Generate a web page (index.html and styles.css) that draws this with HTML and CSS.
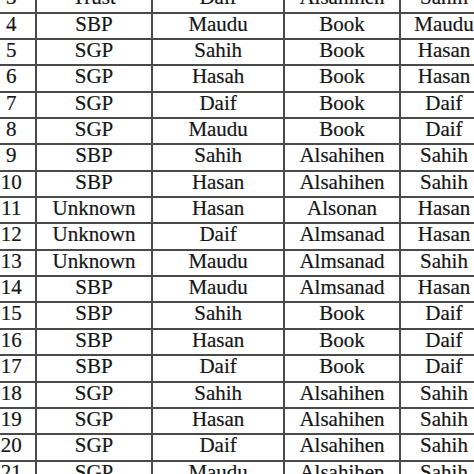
FILE: index.html
```html
<!DOCTYPE html>
<html>
<head>
<meta charset="utf-8">
<link rel="stylesheet" href="styles.css">
</head>
<body>
<div class="table" id="t"></div>
<script>
var rows = [
["3","Trust","Daif","Alsahihen","Sahih"],
["4","SBP","Maudu","Book","Maudu"],
["5","SGP","Sahih","Book","Hasan"],
["6","SGP","Hasah","Book","Hasan"],
["7","SGP","Daif","Book","Daif"],
["8","SGP","Maudu","Book","Daif"],
["9","SBP","Sahih","Alsahihen","Sahih"],
["10","SBP","Hasan","Alsahihen","Sahih"],
["11","Unknown","Hasan","Alsonan","Hasan"],
["12","Unknown","Daif","Almsanad","Hasan"],
["13","Unknown","Maudu","Almsanad","Sahih"],
["14","SBP","Maudu","Almsanad","Hasan"],
["15","SBP","Sahih","Book","Daif"],
["16","SBP","Hasan","Book","Daif"],
["17","SBP","Daif","Book","Daif"],
["18","SGP","Sahih","Alsahihen","Sahih"],
["19","SGP","Hasan","Alsahihen","Sahih"],
["20","SGP","Daif","Alsahihen","Sahih"],
["21","SGP","Maudu","Alsahihen","Sahih"]
];
var t = document.getElementById('t');
rows.forEach(function(r){
  r.forEach(function(c){
    var d = document.createElement('div');
    d.className = 'cell';
    d.textContent = c;
    t.appendChild(d);
  });
});
</script>
</body>
</html>
```
FILE: styles.css
```css
html, body {
  margin: 0;
  padding: 0;
  background: #ffffff;
  overflow: hidden;
}
.table {
  display: grid;
  grid-template-columns: 46.7px 114.6px 129.7px 114px 86px;
  grid-auto-rows: 24.35px;
  gap: 2px;
  background: #4a4a4a;
  width: max-content;
  margin-top: -12.65px;
  margin-left: -12px;
  font-family: "Liberation Serif", "Times New Roman", serif;
  font-size: 21px;
  color: #161616;
}
.cell {
  background: #ffffff;
  text-align: center;
  line-height: 21.35px;
  padding-bottom: 3px;
  box-sizing: border-box;
  white-space: nowrap;
  -webkit-text-stroke: 0.2px #161616;
}
```
